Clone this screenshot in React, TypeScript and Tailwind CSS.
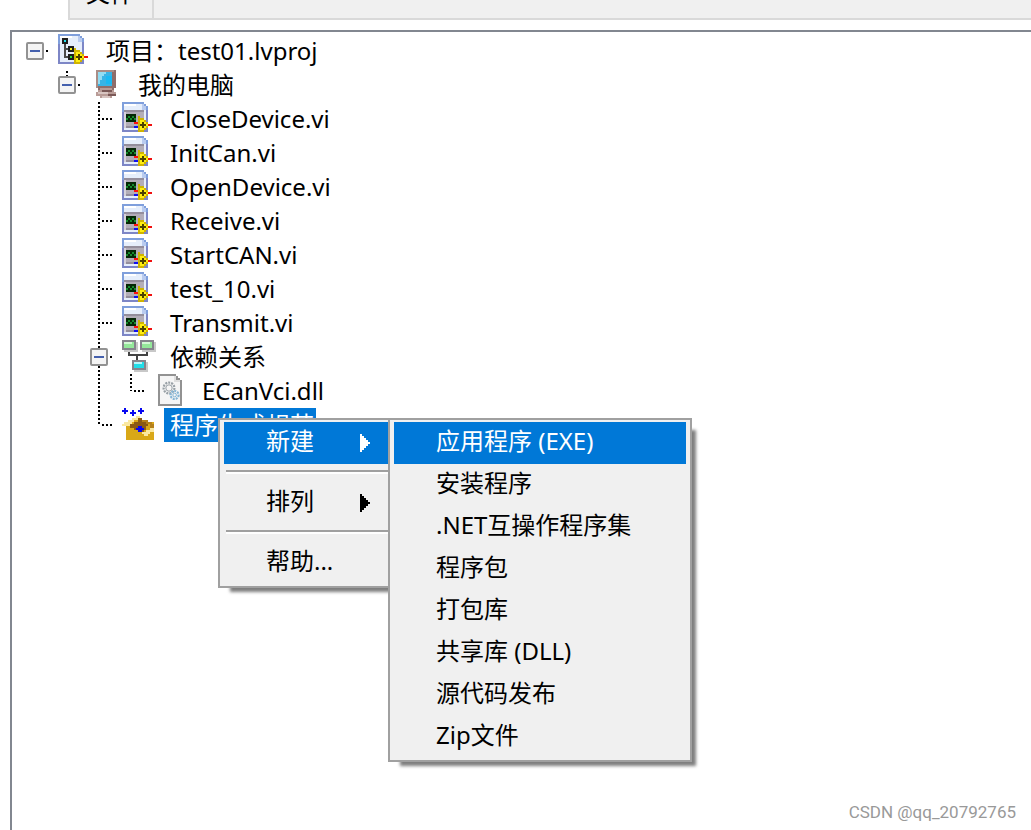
import type { ReactNode } from 'react';
import clsx from 'clsx';

type IconName = 'project' | 'computer' | 'vi' | 'deps' | 'dll' | 'build';

function Page() {
  return (
    <>
      <path d="M0 0h11v1h1v1h1v13H0z" fill="#7f9fdc" />
      <path d="M1 1h9v3h2v10H1z" fill="#e6eefb" />
      <path d="M1 1h6v1H1z" fill="#ffffff" />
      <path d="M10 1h1v1h1v2h-2z" fill="#b9cbef" />
      <path d="M0 5h1v10H0zM1 14h12v1H1zM12 4h1v10h-1z" fill="#7d86c6" />
    </>
  );
}

function Badge() {
  return (
    <>
      <path d="M8 7h1v1h2v1h1v1h1v1h1v1h-1v1h-1v1h-1v1H8z" fill="#d0b400" />
      <path d="M9 9h2v1h1v1h1v1h-1v1h-1v1H9z" fill="#ffee10" />
      <path d="M10 10h1v3h-1zM9 11h3v1H9z" fill="#4c4200" />
      <path d="M13 11h2v1h-2z" fill="#f01010" />
    </>
  );
}

function GearRing({ cx, cy, r, color }: { cx: number; cy: number; r: number; color: string }) {
  return (
    <g fill="none" stroke={color}>
      <circle cx={cx} cy={cy} r={r} strokeWidth="1.1" strokeDasharray="1 0.5" />
      <circle cx={cx} cy={cy} r={r - 1.1} strokeWidth="0.5" />
    </g>
  );
}

const DRAWINGS: Record<IconName, ReactNode> = {
  project: (
    <>
      <Page />
      <path d="M3 5h1v2h1v1H4v3h1v1H3z" fill="#4a4a4a" />
      <path d="M2 2h3v3H2zM5 6h3v3H5zM5 10h3v3H5z" fill="#1d1d1d" />
      <path d="M3 3h1v1H3z" fill="#20e0f0" />
      <path d="M6 7h1v1H6z" fill="#f4f020" />
      <path d="M6 11h1v1H6z" fill="#20e030" />
      <Badge />
    </>
  ),
  vi: (
    <>
      <Page />
      <path d="M1 4h10v9H1z" fill="#b3adb8" />
      <path d="M1 5h1v8H1z" fill="#d6d2da" />
      <path d="M1 4h10v1H1zM2 12h9v1H2z" fill="#948e9c" />
      <path d="M2 6h5v4H2z" fill="#052805" />
      <path d="M2 8h1v1H2zM3 7h1v1H3zM4 8h1v1H4zM5 7h1v1H5zM6 8h1v1H6z" fill="#168a2c" />
      <path d="M6 10h2v1H6z" fill="#ff1010" />
      <path d="M6 12h2v1H6z" fill="#1010f0" />
      <Badge />
    </>
  ),
  computer: (
    <>
      <path d="M3 1h10v9h-1v1H4v-1H3z" fill="#8f6e6b" />
      <path d="M3 1h9v1H4v8H3z" fill="#a98d87" />
      <path d="M4 2h7v7H4z" fill="#38b4e6" />
      <path d="M4 2h4v1H7v1H6v2H5v2H4z" fill="#92dcf2" />
      <path d="M8 4h3v4H8z" fill="#19b9f2" />
      <path d="M5 10h6v1h1v1h1v2h-2v1H5v-1H3v-2h1v-1h1z" fill="#b99c97" />
      <path d="M6 11h5v1H6zM9 13h4v1H9z" fill="#7b5957" />
      <path d="M4 12h5v1H4zM6 14h4v1H6z" fill="#d8c5c1" />
    </>
  ),
  deps: (
    <>
      <path d="M3 5h1v2h8V5h1v3H8v2H7V8H3z" fill="#444444" />
      <path d="M1 1h7v5H1zM10 1h7v5h-7zM6 11h7v5H6z" fill="#c8c8c8" />
      <path d="M0 0h7v5H0zM9 0h7v5H9zM5 10h7v5H5z" fill="#85848c" />
      <path d="M1 1h5v3H1zM10 1h5v3h-5z" fill="#94e89a" />
      <path d="M1 1h4v1H1zM10 1h4v1h-4z" fill="#d2f8d4" />
      <path d="M6 11h5v3H6z" fill="#20dde8" />
      <path d="M6 11h4v1H6z" fill="#b5f5f8" />
    </>
  ),
  dll: (
    <>
      <path d="M2 0h9v1h1v1h1v1h1v13H2z" fill="#929292" />
      <path d="M3 1h7v3h3v11H3z" fill="#f5f5f5" />
      <path d="M11 1v2h2v1h-3V1z" fill="#dedede" />
      <GearRing cx={7.5} cy={7} r={2.7} color="#98a0a6" />
      <GearRing cx={10.3} cy={10.5} r={2} color="#86b6d6" />
    </>
  ),
  build: (
    <>
      <path d="M2 8h3V6h4v1h7v9H2z" fill="#d9a818" />
      <path d="M8 5h2v1h2v1h3v1h-2v1h-1v2h-1v1H8v-1H6v-1H4V8h2V7h2z" fill="#8b5a14" />
      <path d="M10 6h3v1h2v1h1v2h-2V8h-2V7h-2z" fill="#b5811a" />
      <path d="M0 8h1V7h2V6h2V5h2V4h2v1H8v1H6v1H5v1H4v1H0z" fill="#fae8a0" />
      <path d="M10 13v-1h2v-1h2v-1h2v2h-2v1h-1v1h-2v-1z" fill="#fae8a0" />
      <path
        d="M1 0h1v1h1v1H2v1H1V2H0V1h1zM5 1h1v1h1v1H6v1H5V3H4V2h1zM9 0h1v1h1v1h-1v1H9V2H8V1h1zM8 9h2v1h1v1h-1v1H8v-1H7v-1h1z"
        fill="#0808f0"
      />
    </>
  ),
};

function TreeIcon({ name }: { name: IconName }) {
  return (
    <svg
      viewBox="0 0 16 16"
      shapeRendering={name === 'dll' ? undefined : 'crispEdges'}
      className="h-8 w-8 shrink-0 self-start overflow-visible"
      aria-hidden="true"
    >
      {DRAWINGS[name]}
    </svg>
  );
}

type Gutter = 'blank' | 'line' | 'tee' | 'end' | 'root' | 'first' | 'middle';

// Dotted connector lines and the collapse box of one 32x34 tree cell.
function GutterCell({ kind, odd }: { kind: Gutter; odd: boolean }) {
  const shift = odd ? 2 : 0;
  const hasBox = kind === 'root' || kind === 'first' || kind === 'middle';
  const through = kind === 'line' || kind === 'tee' || kind === 'middle';
  const lines = (
    <svg viewBox="0 0 32 34" className="h-full w-full" aria-hidden="true">
      <g stroke="#000" strokeWidth="2" strokeDasharray="2 2" shapeRendering="crispEdges">
        {kind === 'first' && <path d="M9 3V10" />}
        {through && <path d="M9 0V34" strokeDashoffset={shift} />}
        {kind === 'end' && <path d="M9 0V17" strokeDashoffset={shift} />}
        {(kind === 'tee' || kind === 'end') && <path d="M12 17H24" />}
        {hasBox && <path d="M20 17H24" />}
      </g>
      {hasBox && (
        <>
          <rect x="1" y="9" width="16" height="16" rx="1" fill="#f4f4f4" stroke="#929292" strokeWidth="2" />
          <path d="M4 17h10" stroke="#4460ad" strokeWidth="2" />
        </>
      )}
    </svg>
  );
  if (hasBox) {
    return (
      <button type="button" aria-label="-" className="h-full w-8 shrink-0">
        {lines}
      </button>
    );
  }
  return <span className="h-full w-8 shrink-0">{lines}</span>;
}

interface TreeNode {
  label: string;
  icon: IconName;
  gutter: Gutter[];
  selected?: boolean;
}

const NODES: TreeNode[] = [
  { label: '项目：test01.lvproj', icon: 'project', gutter: ['root'] },
  { label: '我的电脑', icon: 'computer', gutter: ['blank', 'first'] },
  { label: 'CloseDevice.vi', icon: 'vi', gutter: ['blank', 'blank', 'tee'] },
  { label: 'InitCan.vi', icon: 'vi', gutter: ['blank', 'blank', 'tee'] },
  { label: 'OpenDevice.vi', icon: 'vi', gutter: ['blank', 'blank', 'tee'] },
  { label: 'Receive.vi', icon: 'vi', gutter: ['blank', 'blank', 'tee'] },
  { label: 'StartCAN.vi', icon: 'vi', gutter: ['blank', 'blank', 'tee'] },
  { label: 'test_10.vi', icon: 'vi', gutter: ['blank', 'blank', 'tee'] },
  { label: 'Transmit.vi', icon: 'vi', gutter: ['blank', 'blank', 'tee'] },
  { label: '依赖关系', icon: 'deps', gutter: ['blank', 'blank', 'middle'] },
  { label: 'ECanVci.dll', icon: 'dll', gutter: ['blank', 'blank', 'line', 'end'] },
  { label: '程序生成规范', icon: 'build', gutter: ['blank', 'blank', 'end'], selected: true },
];

function TreeRow({ node, odd }: { node: TreeNode; odd: boolean }) {
  return (
    <li className="flex h-[34px] items-center">
      {node.gutter.map((kind, i) => (
        <GutterCell key={i} kind={kind} odd={odd} />
      ))}
      <TreeIcon name={node.icon} />
      <div className="relative ml-2.5">
        <span
          className={clsx(
            'block h-[34px] whitespace-nowrap pl-1.5 leading-[34px]',
            node.selected && 'bg-[#0078d7] pr-0.5 text-white'
          )}
        >
          {node.label}
        </span>
        {node.selected && <ContextMenu />}
      </div>
    </li>
  );
}

const MENU_BOX =
  'border-2 border-[#a0a0a0] bg-[#f0f0f0] py-0.5 shadow-[8px_8px_3px_-4px_rgba(0,0,0,0.5)]';

function MenuItem({ label, active, arrow }: { label: string; active?: boolean; arrow?: boolean }) {
  return (
    <button
      type="button"
      role="menuitem"
      className={clsx(
        'flex h-[42px] w-full items-center justify-between pl-[42px] pr-[18px] text-left',
        active && 'bg-[#0078d7] text-white'
      )}
    >
      <span className="whitespace-nowrap pb-1">{label}</span>
      {arrow && (
        <svg viewBox="0 0 10 18" className="h-[18px] w-2.5" fill="currentColor" aria-hidden="true">
          <path d="M0 0h2v2h2v2h2v2h2v2h2v2H8v2H6v2H4v2H2v2H0z" />
        </svg>
      )}
    </button>
  );
}

function Separator() {
  return (
    <div role="separator" className="-mx-0.5 py-1.5 pl-1">
      <div className="h-1.5 border-t-2 border-[#a0a0a0]">
        <div className="h-0.5 bg-white" />
      </div>
    </div>
  );
}

const BUILD_TYPES = [
  '应用程序 (EXE)',
  '安装程序',
  '.NET互操作程序集',
  '程序包',
  '打包库',
  '共享库 (DLL)',
  '源代码发布',
  'Zip文件',
];

function ContextMenu() {
  return (
    <div className="absolute left-[54px] top-2.5 z-10 flex items-start text-black">
      <div role="menu" className={clsx(MENU_BOX, 'w-[172px] pl-1')}>
        <MenuItem label="新建" active arrow />
        <Separator />
        <MenuItem label="排列" arrow />
        <Separator />
        <MenuItem label="帮助..." />
      </div>
      <div role="menu" className={clsx(MENU_BOX, '-ml-0.5 w-[304px] px-1')}>
        {BUILD_TYPES.map((label, i) => (
          <MenuItem key={label} label={label} active={i === 0} />
        ))}
      </div>
    </div>
  );
}

export default function App() {
  return (
    <div className="relative flex h-screen flex-col overflow-hidden bg-white font-['Noto_Sans','Noto_Sans_CJK_SC',sans-serif] text-[24px] text-black">
      <header className="ml-[68px] flex h-5 shrink-0 items-end overflow-hidden border-b-2 border-l-2 border-[#d9d9d9] bg-[#f0f0f0]">
        <button type="button" className="h-10 border-r-2 border-[#d9d9d9] pl-4 pr-[18px] pb-2.5 leading-7">
          文件
        </button>
      </header>
      <main className="ml-2.5 mt-2.5 flex-1 border-l-2 border-t-2 border-[#828790] pl-3.5 pt-0.5">
        <ul>
          {NODES.map((node, i) => (
            <TreeRow key={node.label} node={node} odd={i % 2 === 1} />
          ))}
        </ul>
      </main>
      <footer className="absolute bottom-2 right-[15px] font-[Roboto,sans-serif] text-[17px] leading-5 text-[#999999]">
        CSDN @qq_20792765
      </footer>
    </div>
  );
}
